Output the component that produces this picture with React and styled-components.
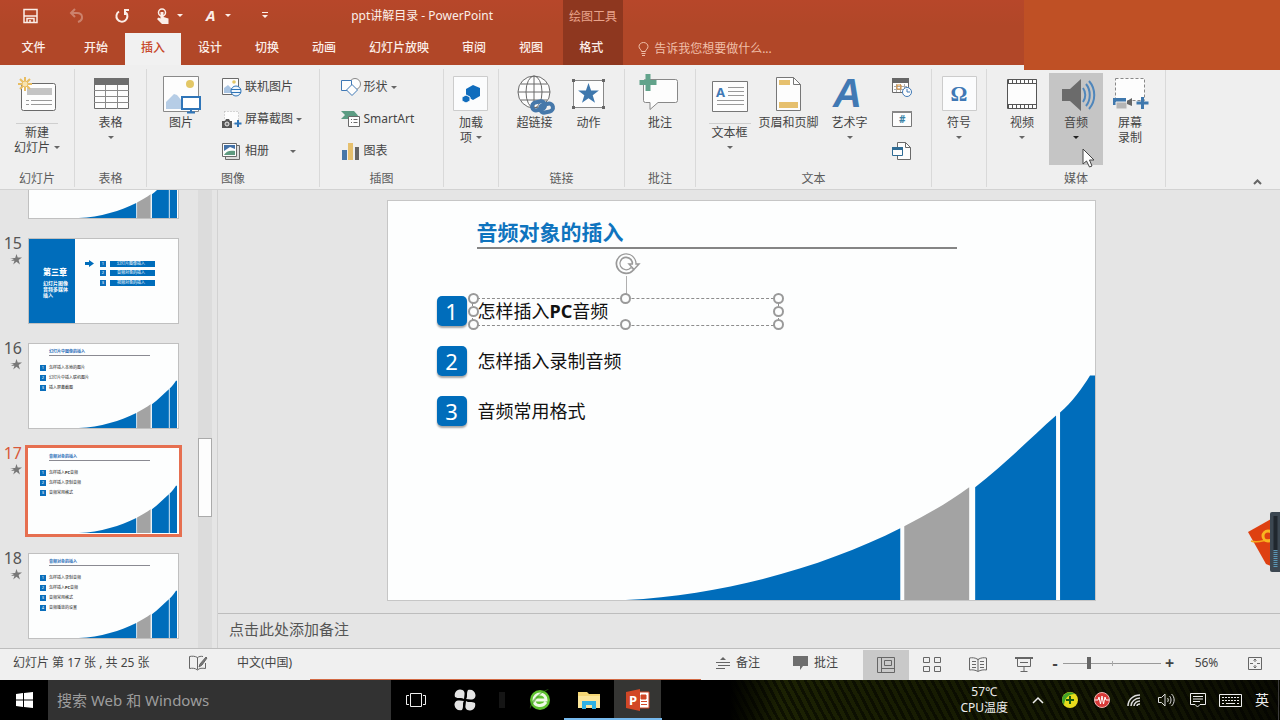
import styled, { createGlobalStyle, css } from 'styled-components'

const GlobalStyle = createGlobalStyle`
  * {
    box-sizing: border-box;
  }

  body {
    margin: 0;
    font-family: 'Noto Sans', 'Noto Sans CJK SC', sans-serif;
    font-size: 12px;
    line-height: 16px;
    color: #444;
  }

  button, input, textarea {
    font: inherit;
    color: inherit;
    border: 0;
    padding: 0;
    margin: 0;
    background: none;
    outline: 0;
  }

  svg {
    display: block;
    flex: none;
    overflow: visible;
  }
`

const Window = styled.div`
  position: relative;
  display: flex;
  flex-direction: column;
  height: 100vh;
  overflow: hidden;
  background: #e5e5e5;
`

/* title bar and tabs */

const Header = styled.header`
  display: flex;
  flex: none;
  height: 65px;
  color: #fbeee8;
  background: linear-gradient(#b7472a, #b14728 40%);
`

const HeaderMain = styled.div`
  display: flex;
  flex-direction: column;
`

const TitleRow = styled.div`
  display: flex;
  align-items: center;
  height: 33px;
  padding: 0 66px 2px 18px;
`

const QuickAccess = styled.div`
  display: flex;
  align-items: center;
  gap: 22px;
`

const QuickButton = styled.button`
  display: flex;
  align-items: center;
  justify-content: center;
  gap: 6px;
  min-width: 24px;
  height: 20px;
  opacity: ${props => (props.$dim ? 0.35 : 1)};
`

const Title = styled.h1`
  margin: 0 0 0 auto;
  font-size: 12px;
  font-weight: 400;
  white-space: nowrap;
`

const Tabs = styled.nav`
  display: flex;
  gap: 1px;
  height: 32px;
`

const Tab = styled.button`
  padding: 0 16px 2px;
  min-width: ${props => (props.$file ? 67 : 56)}px;
  font-weight: 500;
  white-space: nowrap;

  ${props => props.$active && css`
    background: #f1f1f1;
    color: #c8492c;
  `}
`

const ContextTab = styled.div`
  display: flex;
  flex-direction: column;
  width: 60px;
  margin-left: 4px;
  background: #8e371f;
`

const ContextTitle = styled.span`
  height: 33px;
  line-height: 33px;
  text-align: center;
  color: #e9a48c;
`

const TellMe = styled.label`
  display: flex;
  align-items: center;
  gap: 5px;
  align-self: flex-end;
  height: 32px;
  padding: 0 0 1px 15px;
  color: #f0bfa9;

  input {
    width: 160px;
  }

  input::placeholder {
    color: #f0bfa9;
    opacity: 1;
  }
`

const CoverPatch = styled.div`
  position: absolute;
  top: 0;
  right: 0;
  width: 20%;
  height: 70px;
  background: #bf5025;
`

/* ribbon */

const Ribbon = styled.div`
  display: flex;
  flex: none;
  height: 125px;
  padding: 4px 0 2px;
  background: #efefef;
  border-bottom: 1px solid #d2d2d2;
`

const GroupBox = styled.section`
  display: flex;
  flex-direction: column;
  flex: none;
  width: ${props => props.$width}px;
  border-right: 1px solid #d9d9d9;
`

const GroupBody = styled.div`
  display: flex;
  flex: 1;
  justify-content: center;
  gap: ${props => props.$gap || 0}px;
  padding-top: 4px;
`

const GroupLabel = styled.div`
  height: 16px;
  line-height: 16px;
  text-align: center;
  color: #5c5c5c;
`

const BigButton = styled.button`
  display: flex;
  flex-direction: column;
  align-items: center;
  width: ${props => props.$width || 54}px;
  height: 92px;
  white-space: nowrap;
  background: ${props => (props.$pressed ? '#c5c5c5' : 'none')};
`

const IconSlot = styled.span`
  display: block;
  height: 42px;
`

const SplitLine = styled.span`
  width: 42px;
  height: 1px;
  margin: 8px 0 1px;
  background: #cfcfcf;
`

const LabelLine = styled.span`
  display: flex;
  align-items: center;
  justify-content: center;
  gap: 4px;
  height: 15px;
`

const SmallColumn = styled.div`
  display: flex;
  flex-direction: column;
  width: ${props => props.$width}px;
  height: 96px;
  margin-top: -2px;
`

const SmallButton = styled.button`
  display: flex;
  align-items: center;
  justify-content: ${props => (props.$center ? 'center' : 'flex-start')};
  gap: 3px;
  height: 32px;
  white-space: nowrap;
`

const Caret = styled.span`
  width: 0;
  height: 0;
  margin-left: ${props => (props.$far ? 18 : 0)}px;
  border: 3px solid transparent;
  border-top-color: ${props => props.$color || '#666'};
  border-bottom: 0;
`

const RibbonRest = styled.div`
  display: flex;
  flex: 1;
  align-items: flex-end;
  justify-content: flex-end;
  padding: 0 18px 2px 0;
`

/* workspace */

const Workspace = styled.main`
  display: flex;
  flex: 1;
  min-height: 0;
`

const ThumbList = styled.aside`
  display: flex;
  flex-direction: column;
  justify-content: flex-end;
  gap: 19px;
  flex: none;
  width: 198px;
  padding: 0 0 9px 4px;
  overflow: hidden;
`

const ThumbRow = styled.div`
  display: flex;
  flex: none;
  height: 86px;
`

const ThumbNumber = styled.div`
  display: flex;
  flex-direction: column;
  align-items: flex-end;
  gap: 6px;
  width: 18px;
  margin-right: 6px;
  font-size: 16px;
  line-height: 10px;
  color: ${props => (props.$active ? '#d9583a' : '#555')};
`

const Thumb = styled.button`
  position: relative;
  display: flex;
  flex-direction: column;
  justify-content: flex-start;
  align-items: stretch;
  width: 151px;
  height: 86px;
  text-align: left;
  white-space: nowrap;
  background: #fdfefe;
  border: 1px solid #c0c0c0;
  overflow: hidden;

  ${props => props.$active && css`
    border-color: #fdfefe;
    box-shadow: 0 0 0 3px #e66f50;
  `}

  > svg {
    position: absolute;
    right: 1px;
    bottom: 0;
  }
`

const ThumbTitle = styled.div`
  width: 101px;
  height: 12px;
  margin: 0 0 9px 20px;
  padding-top: 4px;
  font-size: 4px;
  line-height: 7px;
  font-weight: 700;
  color: #2a6fb8;
  border-bottom: 1px solid #8a8a92;
`

const ThumbItem = styled.div`
  display: flex;
  align-items: center;
  gap: 3px;
  height: 6px;
  margin: 0 0 4px 11px;
  font-size: 4px;
  line-height: 6px;
  color: #222;
`

const ThumbBadge = styled.span`
  width: 6px;
  height: 6px;
  text-align: center;
  color: #fff;
  background: #0a6ebb;
`

const Chapter = styled.div`
  display: flex;
  height: 100%;
`

const ChapterSide = styled.div`
  flex: none;
  width: 46px;
  padding: 28px 0 0 14px;
  font-size: 5px;
  line-height: 6px;
  font-weight: 700;
  color: #fff;
  background: #006dbb;

  strong {
    display: block;
    margin-bottom: 3px;
    font-size: 8px;
    line-height: 10px;
  }
`

const ChapterList = styled.div`
  display: flex;
  flex-direction: column;
  gap: 4px;
  padding-top: 21px;
`

const ChapterItem = styled.div`
  display: grid;
  grid-template-columns: 11px 6px 45px;
  align-items: center;
  gap: 0 4px;
  padding-left: 10px;
  height: 6px;
  font-size: 4px;
  line-height: 6px;
  color: #fff;

  > :last-child {
    padding-left: 7px;
    background: #006dbb;
  }
`

const ScrollTrack = styled.div`
  display: flex;
  flex-direction: column;
  flex: none;
  width: 14px;
  padding-top: 248px;
  background: #dcdcdc;
`

const ScrollThumb = styled.div`
  height: 79px;
  background: #fdfdfd;
  border: 1px solid #aaa;
`

const Editor = styled.div`
  display: flex;
  flex-direction: column;
  flex: 1;
  min-width: 0;
  margin-left: 5px;
  border-left: 1px solid #d2d2d2;
`

const Canvas = styled.div`
  display: flex;
  flex: 1;
  align-items: center;
  justify-content: center;
  padding: 0 16px 2px 0;
`

const Slide = styled.article`
  position: relative;
  flex: none;
  width: 709px;
  height: 401px;
  background: #fdfefe;
  border: 1px solid #c6c6c6;

  > svg {
    position: absolute;
    right: 0;
    bottom: 0;
  }
`

const SlideTitle = styled.h2`
  width: 480px;
  height: 48px;
  margin: 0 0 47px 89px;
  padding-top: 18px;
  font-size: 21px;
  line-height: 26px;
  font-weight: 700;
  color: #0f74be;
  border-bottom: 2px solid #858585;
`

const Points = styled.ol`
  display: flex;
  flex-direction: column;
  gap: 20px;
  margin: 0;
  padding: 0 0 0 49px;
  list-style: none;
`

const Point = styled.li`
  display: flex;
  align-items: center;
  gap: 11px;
  height: 30px;
  font-size: 18px;
  line-height: 26px;
  color: #111;
`

const Badge = styled.span`
  width: 30px;
  height: 30px;
  border-radius: 5px;
  font-size: 22px;
  line-height: 30px;
  text-align: center;
  color: #fff;
  background: #006dbb;
  box-shadow: 0 2px 2px rgba(0, 0, 0, 0.35);
`

const Selection = styled.div`
  position: absolute;
  left: 84px;
  top: 97px;
  width: 307px;
  height: 28px;
  border: 1px dashed #8d8d8d;
`

const Handle = styled.i`
  position: absolute;
  left: ${props => props.$x}%;
  top: ${props => props.$y}%;
  width: 11px;
  height: 11px;
  margin: -6px 0 0 -5px;
  border: 2px solid #9a9a9a;
  border-radius: 50%;
  background: #fdfefe;
`

const Rotate = styled.div`
  position: absolute;
  left: 50%;
  bottom: 28px;
  display: flex;
  flex-direction: column;
  align-items: center;
  width: 28px;
  margin-left: -13px;

  &::after {
    content: '';
    width: 1px;
    height: 21px;
    background: #b0b0b0;
  }
`

const Notes = styled.textarea`
  display: block;
  flex: none;
  height: 35px;
  padding: 4px 11px;
  font-size: 15px;
  line-height: 22px;
  resize: none;
  border-top: 1px solid #bdbdbd;

  &::placeholder {
    color: #555;
    opacity: 1;
  }
`

/* status bar */

const StatusBar = styled.footer`
  display: flex;
  align-items: center;
  flex: none;
  height: 32px;
  padding: 0 18px 3px 13px;
  border-top: 1px solid #bdbdbd;
  background: linear-gradient(#d26a45, #d26a45) 310px 100% / 391px 1px no-repeat #f0f0f0;
  white-space: nowrap;
`

const StatusGroup = styled.div`
  display: flex;
  align-items: center;
  gap: ${props => props.$gap}px;
  margin-left: ${props => (props.$end ? 'auto' : 0)};
`

const SlideCount = styled.span`
  min-width: 146px;
`

const StatusButton = styled.button`
  display: flex;
  align-items: center;
  gap: 6px;
`

const Views = styled.div`
  display: flex;
  margin: 0 4px 0 25px;
`

const ViewButton = styled.button`
  display: flex;
  align-items: center;
  justify-content: center;
  width: 46px;
  height: 30px;
  margin-bottom: -3px;
  background: ${props => (props.$active ? '#c9c9c9' : 'none')};
`

const Zoom = styled.input`
  appearance: none;
  width: 98px;
  height: 15px;
  background:
    linear-gradient(#aaa, #aaa) 50% 50% / 1px 5px no-repeat,
    linear-gradient(#999, #999) 0 50% / 100% 1px no-repeat;

  &::-webkit-slider-thumb {
    appearance: none;
    width: 4px;
    height: 12px;
    background: #666;
  }
`

const ZoomStep = styled.button`
  width: 8px;
  font-size: 16px;
  font-weight: 700;
`

const ZoomValue = styled.button`
  width: 27px;
  margin: 0 24px 0 16px;
`

/* taskbar */

const Taskbar = styled.div`
  display: flex;
  flex: none;
  height: 40px;
  color: #eee;
  background:
    repeating-linear-gradient(62deg, rgba(0, 0, 0, 0.5) 0 3px, transparent 3px 7px),
    linear-gradient(90deg, #000 57%, #1c2203 61%, #171c02 72%, #151904 88%, #0a0b02);
`

const StartButton = styled.button`
  display: flex;
  align-items: center;
  justify-content: center;
  width: 48px;
`

const Search = styled.input`
  width: 343px;
  padding: 0 9px;
  font-size: 15px;
  background: #323232;

  &::placeholder {
    color: #9d9d9d;
    opacity: 1;
  }
`

const TaskButton = styled.button`
  display: flex;
  align-items: center;
  justify-content: center;
  width: 49px;
  background: ${props => (props.$active ? '#353533' : 'none')};
  background-clip: content-box;
  padding: 0 1px;

  ${props => props.$open && css`
    box-shadow: inset 0 -2px #76b9ed;
  `}
`

const TaskDivider = styled.span`
  width: 6px;
  height: 16px;
  margin: 12px 10px;
  background: #151515;
`

const Tray = styled.div`
  display: flex;
  align-items: center;
  margin-left: auto;
  border-right: 1px solid #3c3c3c;
  margin-right: 1px;
`

const Temperature = styled.div`
  margin-right: 14px;
  text-align: center;
`

const TrayButton = styled.button`
  display: flex;
  align-items: center;
  justify-content: center;
  width: 32px;
  height: 40px;
  font-size: 14px;
`

/* things floating above the window */

const Pointer = styled.div`
  position: absolute;
  left: 1082px;
  top: 148px;
`

const Packet = styled.div`
  position: absolute;
  right: 0;
  top: 512px;
`

/* icons */

const Big = ({ children }) => (
  <svg width="40" height="40" viewBox="0 0 40 40" fill="none" stroke="#6a6a6a">{children}</svg>
)

const Small = ({ children, size = 20 }) => (
  <svg width={size} height={size} viewBox="0 0 20 20" fill="none" stroke="#6a6a6a">{children}</svg>
)

const NewSlideIcon = () => (
  <Big>
    <rect x="4.5" y="10.500" width="34" height="27" rx="2" fill="#fdfdfd" />
    <path d="M10 15h25v7H10z" fill="#c4c4c4" stroke="none" />
    <path d="M9 27.500h3M14 27.500h21M9 31.500h3M14 31.500h21" stroke="#999" />
    <path d="M8 4v14M1 11h14M3 6l10 10M13 6L3 16" stroke="#e8bd62" strokeWidth="2" />
    <circle cx="8" cy="11" r="3" fill="#f7e3b0" stroke="#e8bd62" />
  </Big>
)

const TableIcon = () => (
  <Big>
    <path d="M3.500 5.500h34v30h-34z" fill="#fdfdfd" />
    <path d="M3 5h35v7H3z" fill="#6e6e6e" stroke="none" />
    <path d="M3 17.500h35M3 23.500h35M3 29.500h35M14.500 12v24M26.500 12v24" stroke="#8a8a8a" />
  </Big>
)

const PictureIcon = () => (
  <Big>
    <path d="M2.500 3.500h35v35h-35z" fill="#fdfdfd" stroke="#8a8a8a" />
    <circle cx="29" cy="11" r="4" fill="#e3c766" stroke="none" />
    <path d="M5 36V29l8-8 3 1 5 6v8z" fill="#b6cde6" stroke="none" />
    <path d="M21 24h18v12H21z" fill="#fff" stroke="#2f75b8" strokeWidth="2" />
    <path d="M30 37v2M26 39.500h8" stroke="#2f75b8" strokeWidth="2" />
  </Big>
)

const OnlinePictureIcon = () => (
  <Small>
    <path d="M.5 1.500h16v16H.5z" fill="#fdfdfd" />
    <circle cx="12" cy="5" r="1.800" fill="#e3c766" stroke="none" />
    <path d="M2 16v-5l4-3 4 4v4z" fill="#a9c4e2" stroke="none" />
    <circle cx="14" cy="14" r="5" fill="#eef5fc" stroke="#2f75b8" />
    <path d="M9 12.500h10M9 15.500h10" stroke="#2f75b8" />
  </Small>
)

const ScreenshotIcon = () => (
  <Small>
    <path d="M2.500 2.500h14v12h-14z" fill="#fdfdfd" stroke="#b5b5b5" strokeDasharray="1 2" />
    <path d="M0 12h3l1-2h3l1 2h2v7H0z" fill="#555" stroke="none" />
    <circle cx="5" cy="15" r="2" fill="#777" stroke="#eee" />
    <path d="M16 11v7M12.500 14.500h7" stroke="#2f75b8" strokeWidth="2" />
  </Small>
)

const AlbumIcon = () => (
  <Small>
    <path d="M3.500 4.500h14v14h-14z" fill="#ddd" />
    <path d="M.5 2.500h14v13H.5z" fill="#fdfdfd" />
    <path d="M2 4h11v4L8 6l-6 4z" fill="#4472a8" stroke="none" />
    <path d="M2 14c2-4 6-5 11-4v4z" fill="#5f9a80" stroke="none" />
  </Small>
)

const ShapesIcon = () => (
  <Small>
    <circle cx="14" cy="7" r="5.500" fill="#fdfdfd" stroke="#888" />
    <path d="M.5 3.500h10v10H.5z" fill="#fdfdfd" stroke="#3f78b5" />
    <path d="M11 7.500l5.500 5.500-5.500 5.500L5.500 13z" fill="#fdfdfd" stroke="#3f78b5" />
  </Small>
)

const SmartArtIcon = () => (
  <Small>
    <path d="M0 2h13l4 4.500-3 3.500H0l4-4z" fill="#5c9c83" stroke="none" />
    <path d="M7.500 7.500h11v10h-11z" fill="#fdfdfd" />
    <path d="M10 10.500h1M12.500 10.500h4M10 13.500h1M12.500 13.500h4" />
  </Small>
)

const ChartIcon = () => (
  <Small>
    <path d="M1 9h5v10H1z" fill="#4677a9" stroke="none" />
    <path d="M7 2h5v17H7z" fill="#e6c06e" stroke="none" />
    <path d="M14 6h4v13h-4z" fill="#666" stroke="none" />
  </Small>
)

const AddinIcon = () => (
  <Big>
    <path d="M2.500 3.500h34v34h-34z" fill="#fbfcfd" stroke="#ccc" />
    <path d="M22 12l7 3v8l-7 4-7-4v-7z" fill="#0f6cbd" stroke="none" />
    <path d="M15 22l4 2v4l-4 2-4-2v-4z" fill="#0f6cbd" stroke="#fbfcfd" />
  </Big>
)

const LinkIcon = () => (
  <Big>
    <circle cx="19" cy="19" r="16" fill="#fdfdfd" />
    <ellipse cx="19" cy="19" rx="8" ry="16" />
    <path d="M19 3v32M3 19h32M6 11h26M6 27h26" />
    <g stroke="#4678aa" strokeWidth="4">
      <rect x="17" y="29" width="13" height="8" rx="4" transform="rotate(-12 23 33)" />
      <rect x="25" y="31" width="13" height="8" rx="4" transform="rotate(-12 32 35)" />
    </g>
  </Big>
)

const ActionIcon = () => (
  <Big>
    <path d="M4.500 7.500h30v27h-30z" fill="#fdfdfd" stroke="#888" />
    <path d="M3 6h3v3H3zM33 6h3v3h-3zM3 33h3v3H3zM33 33h3v3h-3z" fill="#666" stroke="none" />
    <path d="M19.500 10l2.600 7.400 7.800.100-6.200 4.700 2.300 7.500-6.500-4.500-6.500 4.500 2.300-7.500-6.200-4.700 7.800-.1z" fill="#3f78ad" stroke="none" />
  </Big>
)

const CommentIcon = () => (
  <Big>
    <path d="M5.500 6.500h30a2 2 0 0 1 2 2v19a2 2 0 0 1-2 2H18l-8 7v-7H5.500a2 2 0 0 1-2-2v-19a2 2 0 0 1 2-2z" fill="#fdfdfd" stroke="#888" />
    <path d="M5.500 1h5v6h6v5h-6v6h-5v-6h-6V7h6z" fill="#62a38b" stroke="none" />
  </Big>
)

const TextBoxIcon = () => (
  <Big>
    <path d="M2.500 8.500h35v30h-35z" fill="#fdfdfd" stroke="#777" />
    <path d="M18 14.500h16M18 18.500h16M18 22.500h16M7 27.500h27M7 31.500h27" stroke="#999" />
    <text x="6" y="24" fontSize="13" fontWeight="700" fill="#3f78b5" stroke="none">A</text>
  </Big>
)

const HeaderFooterIcon = () => (
  <Big>
    <path d="M7.500 4.500h17l7 7v26h-24z" fill="#fdfdfd" stroke="#777" />
    <path d="M24.500 4.500v7h7" stroke="#777" />
    <path d="M10 7h11v5H10zM10 29h19v6H10z" fill="#e6c06e" stroke="none" />
  </Big>
)

const WordArtIcon = () => (
  <Big>
    <text x="3" y="34" fontSize="40" fontWeight="700" fontStyle="italic" fontFamily="Liberation Sans" fill="#4179b4" stroke="none">A</text>
  </Big>
)

const DateIcon = () => (
  <Small>
    <path d="M.5 1.500h16v14H.5z" fill="#fdfdfd" />
    <path d="M0 1h17v5H0z" fill="#666" stroke="none" />
    <path d="M2 9.500h13M2 12.500h13M4.500 7v8M8.500 7v8M12.500 7v8" stroke="#aaa" />
    <path d="M5 8h4v4H5z" stroke="#d88a2c" />
    <circle cx="15" cy="15" r="4.500" fill="#fdfdfd" stroke="#3f78b5" />
    <path d="M15 12v3h3" stroke="#3f78b5" />
  </Small>
)

const NumberIcon = () => (
  <Small>
    <path d="M.5 2.500h19v15H.5z" fill="#fdfdfd" stroke="#777" />
    <path d="M0 2h20v2H0z" fill="#888" stroke="none" />
    <text x="7" y="14" fontSize="10" fontWeight="700" fill="#3b82a6" stroke="none">#</text>
  </Small>
)

const ObjectIcon = () => (
  <Small>
    <path d="M5.500 1.500h8l5 5v12h-13z" fill="#fdfdfd" />
    <path d="M13.500 1.500v5h5" />
    <path d="M.5 6.500h10v8H.5z" fill="#fdfdfd" stroke="#2e6b94" />
    <path d="M0 6h11v3H0z" fill="#2e6b94" stroke="none" />
  </Small>
)

const SymbolIcon = () => (
  <Big>
    <path d="M3.500 3.500h34v34h-34z" fill="#fbfcfd" stroke="#ccc" />
    <text x="20" y="28" fontSize="21" fontWeight="700" fontFamily="Liberation Serif" textAnchor="middle" fill="#3f78b5" stroke="none">Ω</text>
  </Big>
)

const VideoIcon = () => (
  <Big>
    <path d="M5.500 6.500h29v29h-29z" fill="#fdfdfd" stroke="#555" />
    <path d="M5 10.500h30M5 31.500h30" stroke="#555" />
    <path d="M6 8.500h29M6 33.500h29" stroke="#555" strokeWidth="4" strokeDasharray="1 3" />
  </Big>
)

const AudioIcon = () => (
  <Big>
    <path d="M6 16h8L25 6v32L14 28H6z" fill="#6b6b6b" stroke="none" />
    <path d="M27 15c3 4 3 10 0 14M30 11c5 6 5 16 0 22M33 8c7 8 7 20 0 28" stroke="#4f86bb" strokeWidth="2" />
  </Big>
)

const RecordIcon = () => (
  <Big>
    <path d="M5.500 5.500h29v22h-29z" fill="#fdfdfd" stroke="#888" strokeDasharray="3 2" />
    <path d="M3 25h13v7H3z" fill="#3f78ad" stroke="none" />
    <path d="M6 29h11v7H6z" fill="#b5b5b5" stroke="#eee" />
    <path d="M17 28l5-3v8l-5-2z" fill="#666" stroke="none" />
    <path d="M32.500 24v12M26.500 30h12" stroke="#3f78ad" strokeWidth="3" />
  </Big>
)

const Curve = ({ width, height }) => (
  <svg width={width} height={height} viewBox="0 0 708 400" preserveAspectRatio="none">
    <path d="M238 400C340 395 440 365 513 328V400z" fill="#006dbb" />
    <path d="M517 326C540 314 562 302 582 287V400H517z" fill="#a3a3a3" />
    <path d="M588 287C620 262 645 236 669 215V400H588z" fill="#006dbb" />
    <path d="M673 212C685 202 695 188 703 175H708V400H673z" fill="#006dbb" />
  </svg>
)

const StarIcon = () => (
  <svg width="12" height="11" viewBox="0 0 12 11">
    <path d="M6.500 0l1.200 3.600H12L8.600 6l1.300 4.500-3.400-2.700-3.300 2.700L4.500 6.800H1L4 5 0 4h5.200z" fill="#777" />
  </svg>
)

/* data */

const tabs = ['文件', '开始', '插入', '设计', '切换', '动画', '幻灯片放映', '审阅', '视图']

const points = [
  <>怎样插入<b>PC</b>音频</>,
  '怎样插入录制音频',
  '音频常用格式',
]

// the first slide is scrolled past its number and title
const slides = [
  { number: 14, scrolled: true },
  { number: 15, chapter: true },
  { number: 16, title: '幻灯片中图像的插入', items: ['怎样插入本地的图片', '幻灯片中插入联机图片', '插入屏幕截图'] },
  { number: 17, title: '音频对象的插入', items: points },
  { number: 18, title: '音频对象的插入', items: ['怎样插入录制音频', points[0], '音频常用格式', '音频播放的设置'] },
]

const Group = ({ width, label, gap, children }) => (
  <GroupBox $width={width}>
    <GroupBody $gap={gap}>{children}</GroupBody>
    <GroupLabel>{label}</GroupLabel>
  </GroupBox>
)

const Command = ({ icon, lines, menu, inlineMenu, split, width, pressed }) => (
  <BigButton $width={width} $pressed={pressed}>
    <IconSlot>{icon}</IconSlot>
    {split && <SplitLine />}
    {lines.map((line, i) => (
      <LabelLine key={line}>
        {line}
        {inlineMenu && i === lines.length - 1 && <Caret />}
      </LabelLine>
    ))}
    {menu && <LabelLine><Caret $color={pressed && '#222'} /></LabelLine>}
  </BigButton>
)

const ChapterThumb = () => (
  <Chapter>
    <ChapterSide>
      <strong>第三章</strong>
      幻灯片图像<br />音频多媒体<br />插入
    </ChapterSide>
    <ChapterList>
      {['幻灯片图像插入', '音频对象的插入', '视频对象的插入'].map((text, i) => (
        <ChapterItem key={text}>
          {i === 0 ? (
            <svg width="9" height="7" viewBox="0 0 9 7"><path d="M0 2h4V0l5 3.500L4 7V5H0z" fill="#006dbb" /></svg>
          ) : <span />}
          <ThumbBadge>{i + 1}</ThumbBadge>
          <span>{text}</span>
        </ChapterItem>
      ))}
    </ChapterList>
  </Chapter>
)

const ContentThumb = ({ title, items }) => (
  <>
    <ThumbTitle>{title}</ThumbTitle>
    {items.map((item, i) => (
      <ThumbItem key={i}>
        <ThumbBadge>{i + 1}</ThumbBadge>
        <span>{item}</span>
      </ThumbItem>
    ))}
  </>
)

const SlideThumb = ({ slide }) => {
  const active = slide.number === 17;

  return (
    <ThumbRow>
      <ThumbNumber $active={active}>
        {!slide.scrolled && slide.number}
        <StarIcon />
      </ThumbNumber>
      <Thumb $active={active} aria-label={`幻灯片 ${slide.number}`}>
        {slide.chapter ? <ChapterThumb /> : <Curve width={148} height={84} />}
        {slide.items && <ContentThumb title={slide.title} items={slide.items} />}
      </Thumb>
    </ThumbRow>
  )
};

const AppHeader = () => (
  <Header>
    <HeaderMain>
      <TitleRow>
        <QuickAccess>
          <QuickButton aria-label="保存">
            <svg width="17" height="16" viewBox="0 0 17 16" fill="none" stroke="#fbeee8" strokeWidth="1.500">
              <path d="M2 1.500h13v13H2zM2 8h13M5 14v-3.500h7V14" />
              <path d="M8 12v2" />
            </svg>
          </QuickButton>
          <QuickButton $dim aria-label="撤消">
            <svg width="17" height="16" viewBox="0 0 17 16" fill="none" stroke="#fbeee8" strokeWidth="2">
              <path d="M7 1L3 5l4 4M3 5h6c6 0 7 7 1 9" />
            </svg>
          </QuickButton>
          <QuickButton aria-label="重复">
            <svg width="17" height="16" viewBox="0 0 17 16" fill="none" stroke="#fbeee8" strokeWidth="2">
              <path d="M12 4.500A5.500 5.500 0 1 1 5 3.500M15 2h-4v5" />
            </svg>
          </QuickButton>
          <QuickButton aria-label="触摸/鼠标模式">
            <svg width="15" height="16" viewBox="0 0 15 16">
              <circle cx="6" cy="4.500" r="3.500" fill="none" stroke="#fbeee8" strokeWidth="1.500" />
              <path d="M4.500 4h3v5l5 1.500V16H6l-5-5 1.500-1.500 2 1z" fill="#fbeee8" />
            </svg>
            <Caret $color="#fbeee8" />
          </QuickButton>
          <QuickButton aria-label="字体">
            <svg width="14" height="16" viewBox="0 0 14 16">
              <text x="1" y="13" fontSize="15" fontWeight="700" fontStyle="italic" fill="#fbeee8">A</text>
            </svg>
            <Caret $color="#fbeee8" />
          </QuickButton>
          <QuickButton aria-label="自定义快速访问工具栏">
            <svg width="6" height="7" viewBox="0 0 6 7" fill="#fbeee8"><path d="M0 0h6v1H0zM0 3h6L3 6z" /></svg>
          </QuickButton>
        </QuickAccess>
        <Title>ppt讲解目录 - PowerPoint</Title>
      </TitleRow>
      <Tabs>
        {tabs.map((tab) => (
          <Tab key={tab} $file={tab === '文件'} $active={tab === '插入'}>{tab}</Tab>
        ))}
      </Tabs>
    </HeaderMain>
    <ContextTab>
      <ContextTitle>绘图工具</ContextTitle>
      <Tabs as="div"><Tab>格式</Tab></Tabs>
    </ContextTab>
    <TellMe>
      <svg width="11" height="14" viewBox="0 0 11 14" fill="none" stroke="#f0bfa9">
        <path d="M3.500 9.500C3.500 7.500 1 7 1 4.500a4.500 4 0 0 1 9 0C10 7 7.500 7.500 7.500 9.500zM3.500 11.500h4M4 13.500h3" />
      </svg>
      <input aria-label="告诉我您想要做什么" placeholder="告诉我您想要做什么..." />
    </TellMe>
  </Header>
)

const AppRibbon = () => (
  <Ribbon>
    <Group width={75} label="幻灯片">
      <Command width={60} icon={<NewSlideIcon />} lines={['新建', '幻灯片']} split inlineMenu />
    </Group>
    <Group width={72} label="表格">
      <Command icon={<TableIcon />} lines={['表格']} menu />
    </Group>
    <Group width={173} label="图像" gap={14}>
      <Command icon={<PictureIcon />} lines={['图片']} />
      <SmallColumn $width={90}>
        <SmallButton><OnlinePictureIcon />联机图片</SmallButton>
        <SmallButton><ScreenshotIcon />屏幕截图<Caret /></SmallButton>
        <SmallButton><AlbumIcon />相册<Caret $far /></SmallButton>
      </SmallColumn>
    </Group>
    <Group width={124} label="插图">
      <SmallColumn $width={82}>
        <SmallButton><ShapesIcon />形状<Caret /></SmallButton>
        <SmallButton><SmartArtIcon />SmartArt</SmallButton>
        <SmallButton><ChartIcon />图表</SmallButton>
      </SmallColumn>
    </Group>
    <Group width={55}>
      <Command icon={<AddinIcon />} lines={['加载', '项']} inlineMenu />
    </Group>
    <Group width={126} label="链接">
      <Command icon={<LinkIcon />} lines={['超链接']} />
      <Command icon={<ActionIcon />} lines={['动作']} />
    </Group>
    <Group width={71} label="批注">
      <Command icon={<CommentIcon />} lines={['批注']} />
    </Group>
    <Group width={236} label="文本">
      <Command icon={<TextBoxIcon />} lines={['文本框']} split menu />
      <Command width={64} icon={<HeaderFooterIcon />} lines={['页眉和页脚']} />
      <Command width={58} icon={<WordArtIcon />} lines={['艺术字']} menu />
      <SmallColumn $width={46}>
        <SmallButton $center aria-label="日期和时间"><DateIcon /></SmallButton>
        <SmallButton $center aria-label="幻灯片编号"><NumberIcon /></SmallButton>
        <SmallButton $center aria-label="对象"><ObjectIcon /></SmallButton>
      </SmallColumn>
    </Group>
    <Group width={55}>
      <Command icon={<SymbolIcon />} lines={['符号']} menu />
    </Group>
    <Group width={179} label="媒体">
      <Command icon={<VideoIcon />} lines={['视频']} menu />
      <Command icon={<AudioIcon />} lines={['音频']} menu pressed />
      <Command icon={<RecordIcon />} lines={['屏幕', '录制']} />
    </Group>
    <RibbonRest>
      <button aria-label="折叠功能区">
        <svg width="9" height="6" viewBox="0 0 9 6" fill="none" stroke="#666" strokeWidth="2"><path d="M1 5l3.500-3.500L8 5" /></svg>
      </button>
    </RibbonRest>
  </Ribbon>
)

const AppEditor = () => (
  <Editor>
    <Canvas>
      <Slide>
        <Curve width={707} height={399} />
        <SlideTitle>音频对象的插入</SlideTitle>
        <Points>
          {points.map((point, i) => (
            <Point key={i}>
              <Badge>{i + 1}</Badge>
              <span>{point}</span>
            </Point>
          ))}
        </Points>
        <Selection>
          <Rotate>
            <svg width="28" height="22" viewBox="0 0 28 22" fill="none">
              <path d="M20.500 14.500A8 8 0 1 1 22 11" stroke="#999" strokeWidth="5" />
              <path d="M17 10h10l-5 5.500z" fill="#fdfefe" stroke="#999" strokeWidth="1.500" />
              <path d="M20 15A8 8 0 1 1 22 11.500" stroke="#fdfefe" strokeWidth="2" />
            </svg>
          </Rotate>
          {[[0, 0], [50, 0], [100, 0], [0, 50], [100, 50], [0, 100], [50, 100], [100, 100]].map(([x, y]) => (
            <Handle key={`${x}-${y}`} $x={x} $y={y} />
          ))}
        </Selection>
      </Slide>
    </Canvas>
    <Notes aria-label="备注" placeholder="点击此处添加备注" />
  </Editor>
)

const AppStatus = () => (
  <StatusBar>
    <StatusGroup $gap={29}>
      <SlideCount>幻灯片 第 17 张 , 共 25 张</SlideCount>
      <StatusButton aria-label="拼写检查">
        <svg width="20" height="16" viewBox="0 0 20 16" fill="none" stroke="#666">
          <path d="M9.500 2.500C7 1 4 1 1.500 1.500v12c3-.5 5.500-.5 8 1.500 2-2 4.500-2 8-1.500V8M9.500 2.500v12M9.500 2.500C11 1.500 13 1 15 1.500" />
          <path d="M18 2l-6 7-1 3 3-2 5-7z" fill="#777" />
        </svg>
      </StatusButton>
      <StatusButton>中文(中国)</StatusButton>
    </StatusGroup>
    <StatusGroup $gap={33} $end>
      <StatusButton>
        <svg width="14" height="14" viewBox="0 0 14 14" stroke="#666">
          <path d="M7 1l3 3H4z" fill="#666" stroke="none" />
          <path d="M0 6.500h14M2 9.500h12M0 12.500h9" />
        </svg>
        备注
      </StatusButton>
      <StatusButton>
        <svg width="15" height="14" viewBox="0 0 15 14" fill="#6e6e6e"><path d="M0 0h15v10h-5l-3 4v-4H0z" /></svg>
        批注
      </StatusButton>
    </StatusGroup>
    <Views>
      <ViewButton $active aria-label="普通视图">
        <svg width="18" height="16" viewBox="0 0 18 16" fill="none" stroke="#666"><path d="M.5.5h17v15H.5zM4.500.5v15M4.500 11.500h13M7.500 3.500h7v5h-7z" /></svg>
      </ViewButton>
      <ViewButton aria-label="幻灯片浏览">
        <svg width="18" height="15" viewBox="0 0 18 15" fill="none" stroke="#666"><path d="M.5.5h6v5h-6zM11.500.5h6v5h-6zM.5 9.500h6v5h-6zM11.500 9.500h6v5h-6z" /></svg>
      </ViewButton>
      <ViewButton aria-label="阅读视图">
        <svg width="18" height="15" viewBox="0 0 18 15" fill="none" stroke="#666"><path d="M9 2.500C6 .5 3 .5.500 1v12c3-.5 6 0 8.500 1.500 2.500-1.500 5.500-2 8.500-1.500V1C15 .5 12 .5 9 2.500zM9 2v12M3 4.500h4M3 7.500h4M3 10.500h4M11 4.500h4M11 7.500h4M11 10.500h4" /></svg>
      </ViewButton>
      <ViewButton aria-label="幻灯片放映">
        <svg width="18" height="15" viewBox="0 0 18 15" fill="none" stroke="#666"><path d="M0 1h18" strokeWidth="2" /><path d="M2.500 2v7.500h13V2M5 5.500h8M9 9.500v5M5.500 14.500h7" /></svg>
      </ViewButton>
    </Views>
    <StatusGroup $gap={4}>
      <ZoomStep aria-label="缩小">-</ZoomStep>
      <Zoom type="range" aria-label="缩放" min="0" max="100" defaultValue="25" />
      <ZoomStep aria-label="放大">+</ZoomStep>
      <ZoomValue>56%</ZoomValue>
      <StatusButton aria-label="适应窗口">
        <svg width="14" height="13" viewBox="0 0 14 13" fill="none" stroke="#666">
          <path d="M.5.500h13v12H.5z" />
          <path d="M7 2v3M5.500 3.500L7 2l1.500 1.500M7 11V8M5.500 9.500L7 11l1.500-1.500M2 6.500h3M9 6.500h3" />
        </svg>
      </StatusButton>
    </StatusGroup>
  </StatusBar>
)

const AppTaskbar = () => (
  <Taskbar>
    <StartButton aria-label="开始">
      <svg width="17" height="16" viewBox="0 0 17 16" fill="#fff">
        <path d="M0 2l7-1v6.500H0zM8 1l9-1v7.500H8zM0 8.500h7V15l-7-1zM8 8.500h9V16l-9-1z" />
      </svg>
    </StartButton>
    <Search aria-label="搜索" placeholder="搜索 Web 和 Windows" />
    <TaskButton aria-label="任务视图">
      <svg width="20" height="14" viewBox="0 0 20 14" fill="none" stroke="#eee"><path d="M4.500.5h11v13h-11zM3 2.500H.5v9H3M17 2.500h2.500v9H17" /></svg>
    </TaskButton>
    <TaskButton aria-label="应用">
      <svg width="22" height="22" viewBox="0 0 22 22" fill="#e4e4e4">
        <path d="M10 10C8 8 4 10 1 8 0 4 2 1 6 0.500c4 0 5 3 4.500 5z" />
        <path d="M12 10c2-2 0-6 2-9 4-1 7 1 7.500 5 0 4-3 5-5 4.500z" />
        <path d="M12 12c2 2 6 0 9 2 1 4-1 7-5 7.500-4 0-5-3-4.500-5z" />
        <path d="M10 12c-2 2 0 6-2 9-4 1-7-1-7.500-5 0-4 3-5 5-4.500z" />
      </svg>
    </TaskButton>
    <TaskDivider />
    <TaskButton aria-label="浏览器">
      <svg width="22" height="22" viewBox="0 0 22 22">
        <circle cx="11" cy="11" r="10" fill="#5fc22f" />
        <path d="M5 11h12c0-8-12-8-12 0 0 7 9 7 12 2" fill="none" stroke="#eef9e4" strokeWidth="3" />
        <path d="M1 20C0 14 10 2 20 0c-4 3-6 3-9 6S3 16 1 20z" fill="#3f9a1c" opacity=".6" />
      </svg>
    </TaskButton>
    <TaskButton $open aria-label="文件资源管理器">
      <svg width="22" height="18" viewBox="0 0 22 18">
        <path d="M0 1h9l2 2h11v14H0z" fill="#f4d675" />
        <path d="M0 5h22v12H0z" fill="#fbe59a" />
        <path d="M4 18v-8h14v8h-4v-4H8v4z" fill="#2fb1e3" />
      </svg>
    </TaskButton>
    <TaskButton $open $active aria-label="PowerPoint">
      <svg width="24" height="22" viewBox="0 0 24 22">
        <path d="M12 3h11v16H12z" fill="#fff" stroke="#d24726" />
        <path d="M15 6h5v4h-5zM15 12.500h6M15 15.500h6" fill="#d24726" stroke="#d24726" />
        <path d="M0 3l14-3v22L0 19z" fill="#d24726" />
        <text x="3" y="16" fontSize="13" fontWeight="700" fill="#fff">P</text>
      </svg>
    </TaskButton>
    <Tray>
      <Temperature>57℃<br />CPU温度</Temperature>
      <TrayButton aria-label="显示隐藏的图标">
        <svg width="12" height="7" viewBox="0 0 12 7" fill="none" stroke="#eee" strokeWidth="1.500"><path d="M1 6l5-5 5 5" /></svg>
      </TrayButton>
      <TrayButton aria-label="安全卫士">
        <svg width="16" height="16" viewBox="0 0 16 16">
          <circle cx="8" cy="8" r="8" fill="#e8dc1c" />
          <path d="M0 8a8 8 0 0 1 13-6C6 2 3 6 2 13a8 8 0 0 1-2-5z" fill="#43a528" />
          <path d="M8 4v8M4 8h8" stroke="#185c12" strokeWidth="2" />
        </svg>
      </TrayButton>
      <TrayButton aria-label="监控">
        <svg width="16" height="16" viewBox="0 0 16 16">
          <circle cx="8" cy="8" r="7.500" fill="#d93a38" stroke="#f0b5b3" />
          <path d="M1 8h3l1-3 1.500 7L8 4l1.500 8L11 5l1 3h3" fill="none" stroke="#fff" />
        </svg>
      </TrayButton>
      <TrayButton aria-label="网络">
        <svg width="14" height="13" viewBox="0 0 14 13" fill="none" stroke="#ddd" strokeWidth="1.500"><path d="M1 12C1 6 6 1 13 1M4 12c0-4 4-8 9-8M7 12c0-3 3-5 6-5M10 12c0-2 2-2 3-2" /></svg>
      </TrayButton>
      <TrayButton aria-label="音量">
        <svg width="17" height="14" viewBox="0 0 17 14" fill="none" stroke="#ddd"><path d="M.5 4.500h3L7 1v12L3.500 9.500h-3zM9.500 5c1 1 1 3 0 4M11.500 3c2 2 2 6 0 8M13.500 1c3.500 3 3.500 9 0 12" /></svg>
      </TrayButton>
      <TrayButton aria-label="操作中心">
        <svg width="16" height="15" viewBox="0 0 16 15" fill="none" stroke="#eee"><path d="M.5.500h15v11H10L7.500 14 5 11.500H.5zM3 3.500h10M3 6h10M3 8.500h7" /></svg>
      </TrayButton>
      <TrayButton aria-label="触摸键盘">
        <svg width="23" height="13" viewBox="0 0 23 13" fill="none" stroke="#eee"><path d="M.5.500h22v12H.5z" /><path d="M3 3.500h18M3 6.500h18" strokeDasharray="2 1" /><path d="M3 9.500h2M7 9.500h9M18 9.500h2" /></svg>
      </TrayButton>
      <TrayButton>英</TrayButton>
    </Tray>
  </Taskbar>
)

export default () => (
  <Window>
    <GlobalStyle />
    <AppHeader />
    <AppRibbon />
    <Workspace>
      <ThumbList>
        {slides.map((slide) => <SlideThumb key={slide.number} slide={slide} />)}
      </ThumbList>
      <ScrollTrack><ScrollThumb /></ScrollTrack>
      <AppEditor />
    </Workspace>
    <AppStatus />
    <AppTaskbar />
    <CoverPatch />
    <Packet>
      <svg width="32" height="60" viewBox="0 0 32 60">
        <path d="M32 2L0 20l18 32 14 6z" fill="#de4011" />
        <path d="M3 29c8 3 14-2 20-1" fill="none" stroke="#f6a81c" strokeWidth="1.500" />
        <circle cx="20" cy="24" r="5" fill="none" stroke="#f8b520" strokeWidth="3" />
        <rect x="22" y="0" width="12" height="60" rx="2" fill="#3c4751" />
        <path d="M27.500 4v34" stroke="#20272e" strokeWidth="4" />
        <path d="M27.500 38v18" stroke="#5b97b5" strokeWidth="4" strokeDasharray="1 1" />
      </svg>
    </Packet>
    <Pointer>
      <svg width="13" height="20" viewBox="0 0 13 20">
        <path d="M1 1v15l3.500-3 3 6 2.500-1-2.500-6H12z" fill="#fff" stroke="#444" />
      </svg>
    </Pointer>
  </Window>
)
